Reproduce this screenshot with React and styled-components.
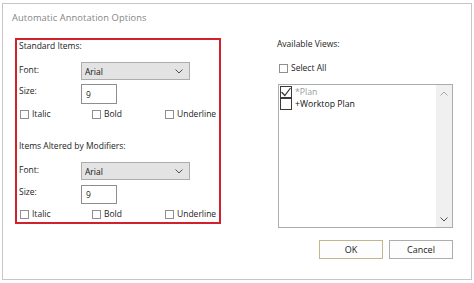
import React from 'react'
import styled, { createGlobalStyle } from 'styled-components'

const GlobalStyle = createGlobalStyle`
  html, body {
    margin: 0;
    padding: 0;
    background: #ffffff;
  }
  body {
    font-family: "Open Sans", "Noto Sans", sans-serif;
    font-size: 8.5px;
    color: #1c1c1c;
  }
`

const Chevron = ({ up }) => (
  <svg width="8" height="5" viewBox="0 0 8 5">
    <polyline
      points={up ? '0.5,4.5 4,1 7.5,4.5' : '0.5,0.5 4,4 7.5,0.5'}
      fill="none"
      stroke={up ? '#a8a8a8' : '#505050'}
      strokeWidth="1"
    />
  </svg>
)

const Tick = () => (
  <svg width="10" height="10" viewBox="0 0 10 10">
    <polyline points="0.5,5 3.8,8.5 9.5,1" fill="none" stroke="#333" strokeWidth="1.2" />
  </svg>
)

const App = () => {
  return (
    <Page>
      <GlobalStyle />
      <Dialog>
        <TitleBar>Automatic Annotation Options</TitleBar>
        <Body>
          <Columns>
            <Highlight>
              <Section>
                <Heading>Standard Items:</Heading>
                <FieldRow $gap={11}>
                  <Label $pad={2}>Font:</Label>
                  <Select>
                    <span>Arial</span>
                    <Chevron />
                  </Select>
                </FieldRow>
                <FieldRow $gap={4}>
                  <Label $pad={1}>Size:</Label>
                  <SizeInput>9</SizeInput>
                </FieldRow>
                <StyleRow>
                  <Check><Box />Italic</Check>
                  <Check><Box />Bold</Check>
                  <Check><Box />Underline</Check>
                </StyleRow>
              </Section>
              <Section $top={20}>
                <Heading>Items Altered by Modifiers:</Heading>
                <FieldRow $gap={11}>
                  <Label $pad={2}>Font:</Label>
                  <Select>
                    <span>Arial</span>
                    <Chevron />
                  </Select>
                </FieldRow>
                <FieldRow $gap={5}>
                  <Label $pad={1}>Size:</Label>
                  <SizeInput $h={19}>9</SizeInput>
                </FieldRow>
                <StyleRow>
                  <Check><Box />Italic</Check>
                  <Check><Box />Bold</Check>
                  <Check><Box />Underline</Check>
                </StyleRow>
              </Section>
            </Highlight>

            <ViewsColumn>
              <Heading>Available Views:</Heading>
              <SelectAll><Box />Select All</SelectAll>
              <ViewList>
                <Items>
                  <ViewItem $muted>
                    <ListBox><Tick /></ListBox>
                    *Plan
                  </ViewItem>
                  <ViewItem>
                    <ListBox />
                    +Worktop Plan
                  </ViewItem>
                </Items>
                <ScrollTrack>
                  <Chevron up />
                  <Chevron up={false} />
                </ScrollTrack>
              </ViewList>
            </ViewsColumn>
          </Columns>

          <ButtonRow>
            <Button $primary>OK</Button>
            <Button>Cancel</Button>
          </ButtonRow>
        </Body>
      </Dialog>
    </Page>
  )
}

const Page = styled.div`
  padding: 3px 0 0 2px;
`

const Dialog = styled.div`
  box-sizing: border-box;
  width: 470px;
  height: 277px;
  border: 1px solid #c6c6c6;
  background: #ffffff;
  display: flex;
  flex-direction: column;
`

const TitleBar = styled.div`
  height: 26px;
  line-height: 27px;
  padding-left: 9px;
  font-size: 9.3px;
  color: #858585;
  letter-spacing: 0.1px;
`

const Body = styled.div`
  padding: 8px 18px 0 12px;
`

const Columns = styled.div`
  display: flex;
  gap: 56px;
  align-items: flex-start;
`

const Highlight = styled.div`
  box-sizing: border-box;
  width: 206px;
  border: 2px solid #d2212e;
  padding: 0 2px 2px 2px;
`

const Section = styled.div`
  margin-top: ${p => p.$top || 0}px;
`

const Heading = styled.div`
  line-height: 11px;
  white-space: nowrap;
`

const FieldRow = styled.div`
  display: grid;
  grid-template-columns: 62px auto;
  align-items: start;
  margin-top: ${p => p.$gap}px;
`

const Label = styled.div`
  line-height: 11px;
  padding-top: ${p => p.$pad}px;
`

const Select = styled.div`
  box-sizing: border-box;
  width: 109px;
  height: 18px;
  background: #e3e3e3;
  border: 1px solid #adadad;
  display: flex;
  align-items: center;
  justify-content: space-between;
  padding: 0 6px 0 3px;
  color: #111;
`

const SizeInput = styled.div`
  box-sizing: border-box;
  width: 36px;
  height: ${p => p.$h || 20}px;
  border: 1px solid #8e8e8e;
  background: #fff;
  display: flex;
  align-items: center;
  padding-left: 4px;
`

const StyleRow = styled.div`
  display: grid;
  grid-template-columns: 72px 73px auto;
  margin-top: 4px;
  padding-left: 1px;
  height: 12px;
  align-items: center;
`

const Check = styled.div`
  display: flex;
  align-items: center;
  gap: 3px;
  line-height: 12px;
  white-space: nowrap;
`

const Box = styled.span`
  box-sizing: border-box;
  display: inline-block;
  width: 9px;
  height: 9px;
  border: 1px solid #8f8f8f;
  background: #fff;
`

const ViewsColumn = styled.div`
  width: 176px;
  display: flex;
  flex-direction: column;
`

const SelectAll = styled(Check)`
  margin-top: 13px;
  padding-left: 2px;
`

const ViewList = styled.div`
  box-sizing: border-box;
  margin: 10px 0 0 1px;
  width: 175px;
  height: 144px;
  border: 1px solid #acacac;
  display: flex;
`

const Items = styled.div`
  flex: 1;
  padding: 1px 0 0 1px;
`

const ViewItem = styled.div`
  display: flex;
  align-items: center;
  gap: 3px;
  height: 12px;
  line-height: 12px;
  font-size: 8.7px;
  color: ${p => (p.$muted ? '#9a9a9a' : '#111')};
`

const ListBox = styled.span`
  box-sizing: border-box;
  width: 12px;
  height: 12px;
  border: 1px solid #3a3a3a;
  background: #fff;
  display: flex;
  align-items: center;
  justify-content: center;
`

const ScrollTrack = styled.div`
  width: 16px;
  background: #f0f0f0;
  display: flex;
  flex-direction: column;
  justify-content: space-between;
  align-items: center;
  padding: 6px 0 5px;
`

const ButtonRow = styled.div`
  display: flex;
  justify-content: flex-end;
  gap: 6px;
  margin-top: 12px;
`

const Button = styled.div`
  box-sizing: border-box;
  width: 64px;
  height: 19px;
  border: 1px solid ${p => (p.$primary ? '#c2b68e' : '#adadad')};
  background: #fdfdfd;
  display: flex;
  align-items: center;
  justify-content: center;
  font-size: 9px;
  color: #222;
`

export default App
